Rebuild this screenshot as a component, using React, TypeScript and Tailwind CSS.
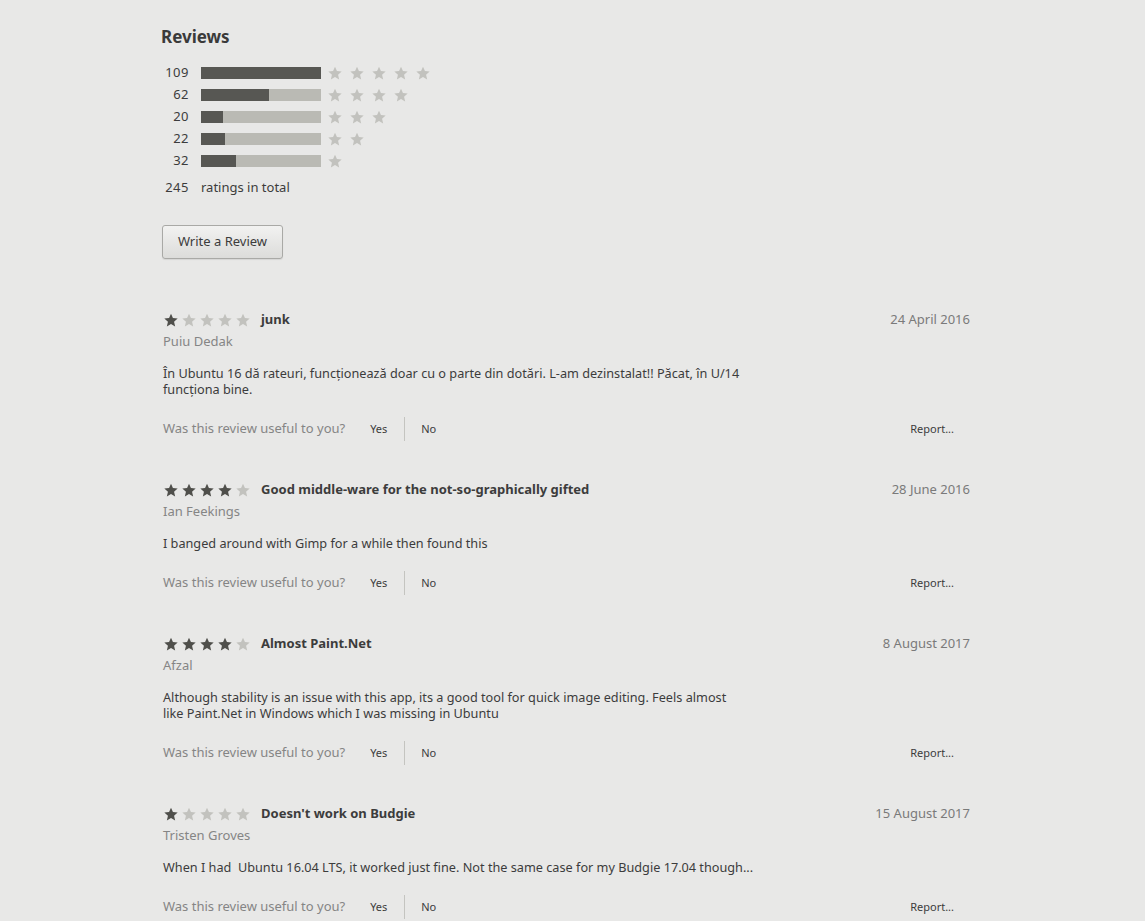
import React from 'react';

const histogram = [
  { count: 109, fill: 120, stars: 5 },
  { count: 62, fill: 68, stars: 4 },
  { count: 20, fill: 22, stars: 3 },
  { count: 22, fill: 24, stars: 2 },
  { count: 32, fill: 35, stars: 1 },
];

const reviews = [
  {
    rating: 1,
    title: 'junk',
    author: 'Puiu Dedak',
    date: '24 April 2016',
    body: 'În Ubuntu 16 dă rateuri, funcționează doar cu o parte din dotări. L-am dezinstalat!! Păcat, în U/14 funcționa bine.',
  },
  {
    rating: 4,
    title: 'Good middle-ware for the not-so-graphically gifted',
    author: 'Ian Feekings',
    date: '28 June 2016',
    body: 'I banged around with Gimp for a while then found this',
  },
  {
    rating: 4,
    title: 'Almost Paint.Net',
    author: 'Afzal',
    date: '8 August 2017',
    body: 'Although stability is an issue with this app, its a good tool for quick image editing. Feels almost\nlike Paint.Net in Windows which I was missing in Ubuntu',
  },
  {
    rating: 1,
    title: "Doesn't work on Budgie",
    author: 'Tristen Groves',
    date: '15 August 2017',
    body: 'When I had  Ubuntu 16.04 LTS, it worked just fine. Not the same case for my Budgie 17.04 though...',
  },
];

const Star = ({ filled }: { filled: boolean }) => (
  <svg viewBox="0 0 24 24" className={`w-4 h-4 ${filled ? 'fill-[#4f4f4b]' : 'fill-[#c2c2be]'}`}>
    <path d="M12 2.5l2.9 6.6 7.1.7-5.4 4.8 1.6 7-6.2-3.7-6.2 3.7 1.6-7L2 9.8l7.1-.7z" />
  </svg>
);

export default function App() {
  return (
    <div className="min-h-[921px] bg-[#e8e8e7] text-[#3c3c3c] font-['Noto_Sans',sans-serif] text-[13px]">
      <div className="ml-[161px] w-[809px] pt-[25px]">
        <h2 className="text-[17px] font-bold leading-[24px] text-[#3a3a3a]">Reviews</h2>

        <div className="mt-[13px] flex flex-col">
          {histogram.map(row => (
            <div key={row.count + '-' + row.stars} className="flex items-center h-[22px]">
              <span className="w-[28px] text-right tracking-[0.5px]">{row.count}</span>
              <div className="ml-[12px] w-[120px] h-[12px] bg-[#babab4] flex">
                <div className="h-full bg-[#575753]" style={{ width: row.fill }} />
              </div>
              <div className="ml-[6px] flex gap-[6px]">
                {Array.from({ length: row.stars }).map((_, i) => (
                  <Star key={i} filled={false} />
                ))}
              </div>
            </div>
          ))}
          <div className="flex items-center h-[22px] mt-[5px]">
            <span className="w-[28px] text-right tracking-[0.5px]">245</span>
            <span className="ml-[12px]">ratings in total</span>
          </div>
        </div>

        <button className="mt-[26px] ml-[1px] w-[121px] h-[34px] rounded-[3px] border border-[#a9a9a6] bg-gradient-to-b from-[#f2f2f1] to-[#dcdcda] text-[13px] text-[#3c3c3c] shadow-[0_1px_1px_rgba(0,0,0,0.08)]">
          Write a Review
        </button>

        <div className="mt-[51px] ml-[2px] flex flex-col gap-[39px]">
          {reviews.map(r => (
            <div key={r.title} className="flex flex-col">
              <div className="flex items-center h-[20px]">
                <div className="flex gap-[2px]">
                  {Array.from({ length: 5 }).map((_, i) => (
                    <Star key={i} filled={i < r.rating} />
                  ))}
                </div>
                <span className="ml-[10px] font-bold">{r.title}</span>
                <span className="ml-auto text-[#7a7a7a]">{r.date}</span>
              </div>
              <div className="mt-[1px] h-[20px] leading-[20px] text-[#858585]">{r.author}</div>
              <p className="mt-[14px] w-[610px] text-[12.7px] leading-[16px] whitespace-pre-wrap">{r.body}</p>
              <div className="mt-[20px] flex items-center h-[24px]">
                <span className="text-[#858585]">Was this review useful to you?</span>
                <span className="ml-[25px] text-[11px] w-[34px]">Yes</span>
                <div className="w-px h-[24px] bg-[#c4c4c0]" />
                <span className="ml-[16px] text-[11px]">No</span>
                <span className="ml-auto mr-[16px] text-[11px]">Report...</span>
              </div>
            </div>
          ))}
        </div>
      </div>
    </div>
  );
}
